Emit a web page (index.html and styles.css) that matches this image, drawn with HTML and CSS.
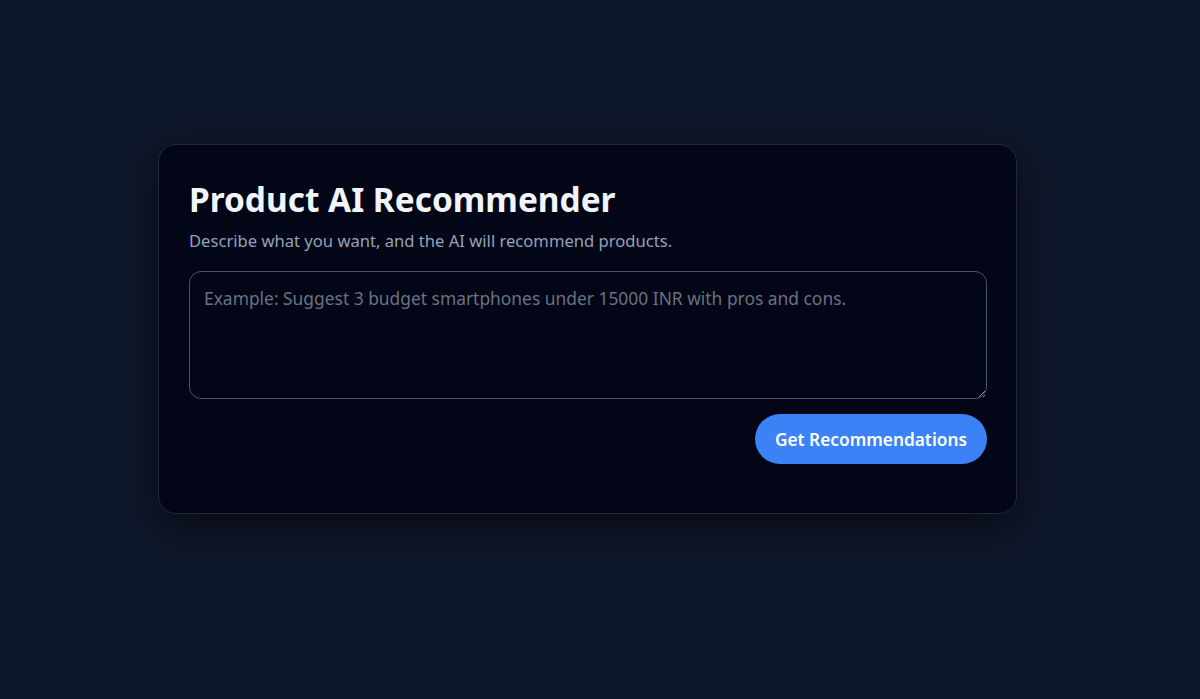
FILE: index.html
```html
<!DOCTYPE html>
<html lang="en">
	<head>
		<meta charset="UTF-8">
		<title>Product AI Recommender</title>
		<link rel="stylesheet" href="styles.css">
	</head>
	<body>
		<div class="card">
			<h1>Product AI Recommender</h1>
			<p class="subtitle">Describe what you want, and the AI will recommend products.</p>
			<textarea placeholder="Example: Suggest 3 budget smartphones under 15000 INR with pros and cons."></textarea>
			<div class="actions">
				<button class="recommend">Get Recommendations</button>
			</div>
		</div>
	</body>
</html>
```

FILE: styles.css
```css
html, body {
	margin: 0px;
	padding: 0px;
	height: 100%;
	box-sizing: border-box;
}
body {
	background-color: #0f172a;
	font-family: "Noto Sans", "Open Sans", sans-serif;
	padding: 144px 0px 0px 158px;
	display: flex;
	justify-content: flex-start;
	align-items: flex-start;
}
.card {
	width: 859px;
	box-sizing: border-box;
	background-color: #020617;
	border: 1px solid #1e293b;
	border-radius: 18px;
	padding: 34px 29px 49px 30px;
	box-shadow: 0px 12px 40px rgba(0, 0, 0, 0.55);
}
.card > h1 {
	margin: 0px;
	color: #f1f5f9;
	font-size: 33.4px;
	line-height: 40px;
	font-weight: 700;
}
.card > .subtitle {
	margin: 10px 0px 0px 0px;
	color: #94a3b8;
	font-size: 16.6px;
	line-height: 24px;
}
textarea {
	display: block;
	width: 100%;
	height: 128px;
	box-sizing: border-box;
	margin-top: 18px;
	padding: 14px 14px;
	background-color: #020617;
	color: #e2e8f0;
	border: 1px solid #475569;
	border-radius: 12px;
	font-family: inherit;
	font-size: 17.4px;
	line-height: 24px;
	resize: vertical;
	outline: none;
}
textarea::placeholder {
	color: #6b7280;
}
.actions {
	display: flex;
	justify-content: flex-end;
	margin-top: 15px;
}
button.recommend {
	height: 50px;
	padding: 0px 20px;
	background-color: #3b82f6;
	color: #fff;
	border: none;
	border-radius: 25px;
	font-family: inherit;
	font-size: 17.3px;
	font-weight: 600;
}
```
